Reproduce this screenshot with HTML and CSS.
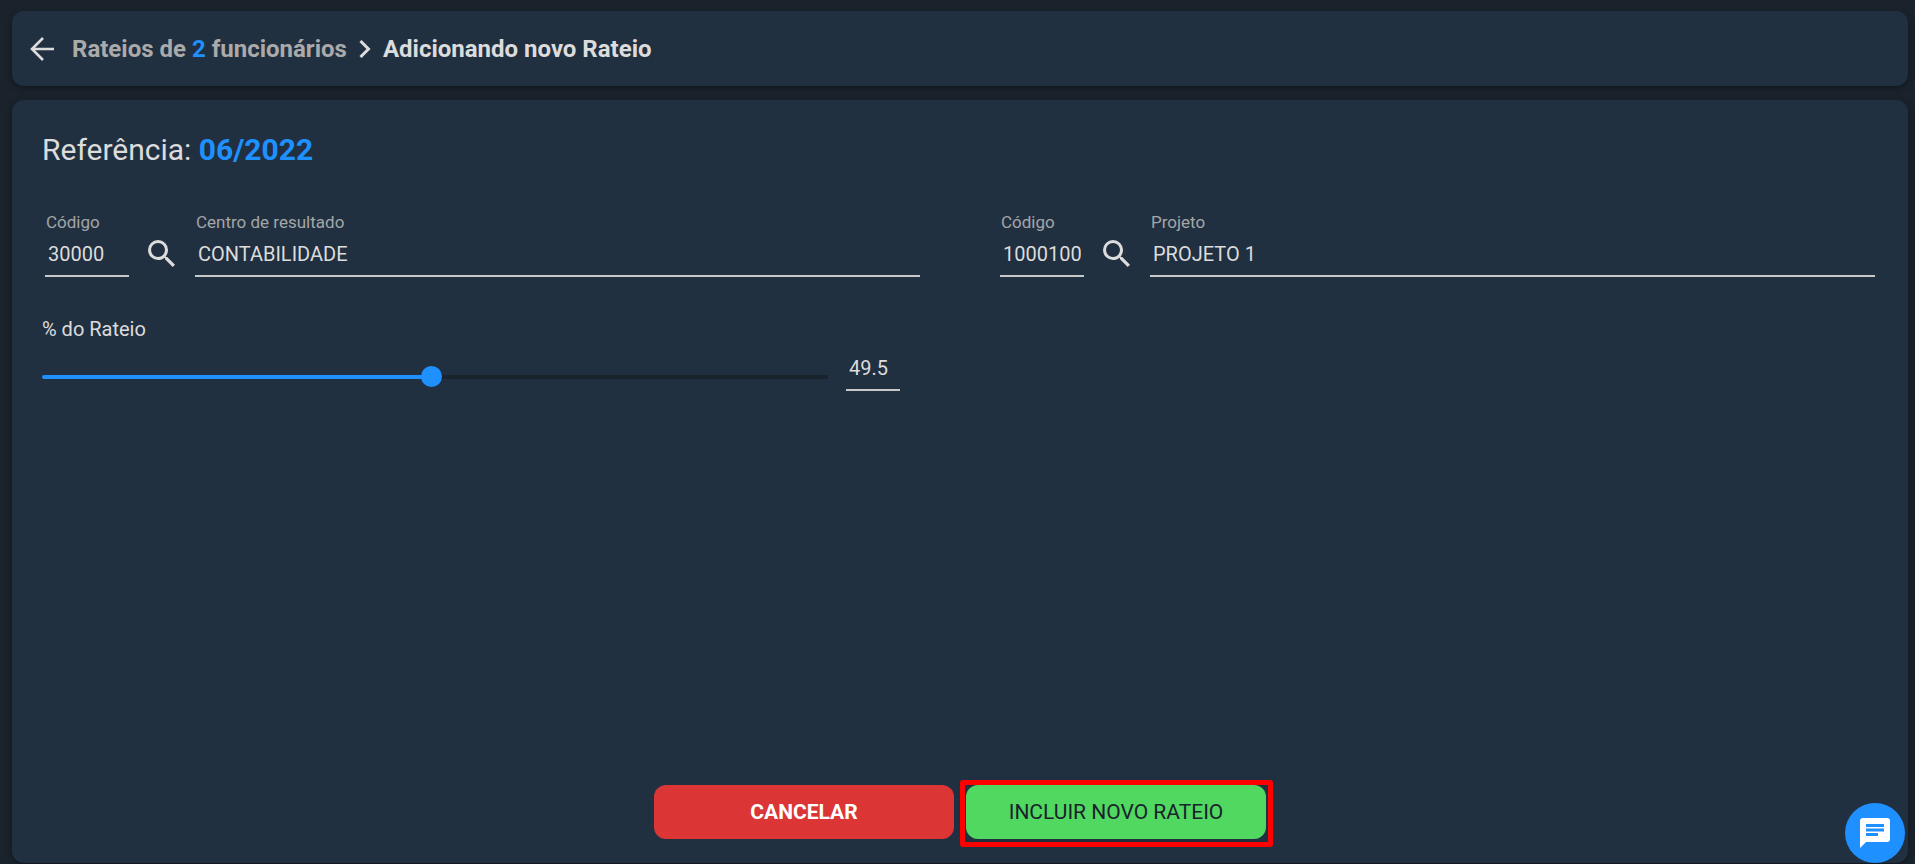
FILE: index.html
```html
<!DOCTYPE html>
<html lang="pt-BR">
<head>
<meta charset="utf-8">
<meta name="viewport" content="width=device-width, initial-scale=1">
<title>Adicionando novo Rateio</title>
<link rel="stylesheet" href="styles.css">
</head>
<body>
<header class="topbar">
  <button class="icon-button" type="button" aria-label="Voltar">
    <svg class="back-icon" viewBox="0 0 24 24" fill="none" stroke="currentColor" stroke-width="2.600"><path d="M24 12H2M13 1L2 12l11 11"/></svg>
  </button>
  <nav class="breadcrumb" aria-label="Navegação">
    <a class="crumb" href="#">Rateios de <span class="accent">2</span> funcionários</a>
    <svg class="chevron-icon" viewBox="0 0 12 18" fill="none" stroke="currentColor" stroke-width="3"><path d="M1.500 1l8 8-8 8"/></svg>
    <h1 class="current">Adicionando novo Rateio</h1>
  </nav>
</header>
<main class="card">
  <h2 class="reference">Referência: <strong class="accent">06/2022</strong></h2>
  <form class="form">
    <div class="lookups">
      <div class="lookup">
        <div class="field field-code">
          <label class="label" for="cr-code">Código</label>
          <input class="input" id="cr-code" type="text" value="30000">
        </div>
        <button class="icon-button search" type="button" aria-label="Buscar centro de resultado">
          <svg class="search-icon" viewBox="3 3 17.500 17.500" fill="currentColor"><path d="M15.500 14h-.79l-.28-.27A6.471 6.471 0 0 0 16 9.500 6.500 6.500 0 1 0 9.500 16c1.610 0 3.090-.59 4.230-1.570l.27.28v.79l5 4.990L20.490 19l-4.990-5zm-6 0C7.010 14 5 11.990 5 9.500S7.010 5 9.500 5 14 7.010 14 9.500 11.990 14 9.500 14z"/></svg>
        </button>
        <div class="field field-name">
          <label class="label" for="cr-name">Centro de resultado</label>
          <input class="input" id="cr-name" type="text" value="CONTABILIDADE">
        </div>
      </div>
      <div class="lookup">
        <div class="field field-code">
          <label class="label" for="pj-code">Código</label>
          <input class="input" id="pj-code" type="text" value="10001001">
        </div>
        <button class="icon-button search" type="button" aria-label="Buscar projeto">
          <svg class="search-icon" viewBox="3 3 17.500 17.500" fill="currentColor"><path d="M15.500 14h-.79l-.28-.27A6.471 6.471 0 0 0 16 9.500 6.500 6.500 0 1 0 9.500 16c1.610 0 3.090-.59 4.230-1.570l.27.28v.79l5 4.990L20.490 19l-4.990-5zm-6 0C7.010 14 5 11.990 5 9.500S7.010 5 9.500 5 14 7.010 14 9.500 11.990 14 9.500 14z"/></svg>
        </button>
        <div class="field field-name">
          <label class="label" for="pj-name">Projeto</label>
          <input class="input" id="pj-name" type="text" value="PROJETO 1">
        </div>
      </div>
    </div>
    <div class="share">
      <label class="share-label" for="share-range">% do Rateio</label>
      <div class="share-row">
        <input class="range" id="share-range" type="range" min="0" max="100" step="0.5" value="49.5" style="--value: 49.5%">
        <input class="input share-value" type="text" inputmode="decimal" aria-label="Percentual do rateio" value="49.5">
      </div>
    </div>
    <div class="actions">
      <button class="button cancel" type="button">CANCELAR</button>
      <div class="highlight">
        <button class="button confirm" type="submit">INCLUIR NOVO RATEIO</button>
      </div>
    </div>
  </form>
</main>
<button class="chat" type="button" aria-label="Abrir chat">
  <svg class="chat-icon" viewBox="0 0 30 30"><path fill="#fff" d="M3 0h24a3 3 0 0 1 3 3v18a3 3 0 0 1-3 3H6l-6 6V3a3 3 0 0 1 3-3z"/><path fill="#1e90ff" d="M6 6h18v3H6zM6 10.500h18v3H6zM6 15h12v3H6z"/></svg>
</button>
</body>
</html>
```
FILE: styles.css
```css
* { box-sizing: border-box; }

body {
  display: flex;
  flex-direction: column;
  gap: 14px;
  min-height: 100vh;
  margin: 0;
  padding: 11px 7px 1px 12px;
  background: #1a232c;
  color: #dcdcdc;
  font-family: Roboto, "Liberation Sans", sans-serif;
  font-size: 20px;
}

button, input { font: inherit; color: inherit; }
button { padding: 0; border: 0; background: none; cursor: pointer; }
svg { display: block; }
.accent { color: #1e90ff; }

.topbar, .card {
  border-radius: 12px;
  background: #213040;
  box-shadow: 0 2px 6px rgba(0, 0, 0, 0.4);
}

.topbar {
  display: flex;
  align-items: center;
  gap: 18px;
  padding: 23px 18px 22px;
}
.back-icon { width: 24px; height: 24px; }
.breadcrumb { display: flex; align-items: center; gap: 12px; line-height: 30px; }
.crumb, .current { margin: 0; font-size: 24px; font-weight: 700; }
.crumb { color: #aaa; text-decoration: none; }
.chevron-icon { width: 12px; height: 18px; }

.card {
  display: flex;
  flex: 1;
  flex-direction: column;
  padding: 30px 30px 24px;
}
.reference { margin: 0; font-size: 30px; font-weight: 400; line-height: 40px; }
.form { display: flex; flex: 1; flex-direction: column; }

.lookups {
  display: grid;
  grid-template-columns: 1fr 1fr;
  gap: 80px;
  padding: 40px 3px 0;
}
.lookup { display: flex; align-items: flex-end; }
.field { display: flex; flex-direction: column; }
.field-code { width: 84px; }
.field-name { flex: 1; }
.label { padding-left: 1px; color: #a4a6a8; font-size: 17px; line-height: 24px; }
.input {
  width: 100%;
  min-width: 0;
  height: 43px;
  padding: 0 3px 2px;
  border: 0;
  border-bottom: 2px solid #c8c8c8;
  border-radius: 0;
  background: none;
  outline: none;
}
.search { width: 66px; padding: 0 0 10px 19px; }
.search-icon { width: 27px; height: 27px; }

.share { width: calc(50% - 60px); padding-top: 40px; }
.share-label { display: block; line-height: 24px; }
.share-row { display: flex; align-items: flex-end; gap: 18px; padding-top: 7px; }
.share-value { width: 54px; }

.range {
  flex: 1;
  min-width: 0;
  height: 21px;
  margin: 0 0 4px;
  background: none;
  appearance: none;
}
.range::-webkit-slider-runnable-track {
  height: 4px;
  border-radius: 2px;
  background: linear-gradient(to right, #1e90ff var(--value), #1a232c var(--value));
}
.range::-webkit-slider-thumb {
  width: 21px;
  height: 21px;
  margin-top: -9px;
  border-radius: 50%;
  background: #1e90ff;
  appearance: none;
}

.actions { display: flex; justify-content: center; gap: 12px; margin-top: auto; }
.button { width: 300px; height: 54px; border-radius: 12px; font-size: 21px; }
.cancel { background: #dc3535; color: #fff; font-weight: 700; }
.confirm { background: #50d860; color: #1a232c; }
.highlight { position: relative; }
.highlight::after {
  position: absolute;
  inset: -5px -7px -8px -6px;
  border: 5px solid #f00;
  border-radius: 3px;
  content: "";
  pointer-events: none;
}

.chat {
  position: fixed;
  right: 10px;
  bottom: 1px;
  display: grid;
  place-items: center;
  width: 60px;
  height: 60px;
  border-radius: 50%;
  background: #1e90ff;
}
.chat-icon { width: 30px; height: 30px; }
```
